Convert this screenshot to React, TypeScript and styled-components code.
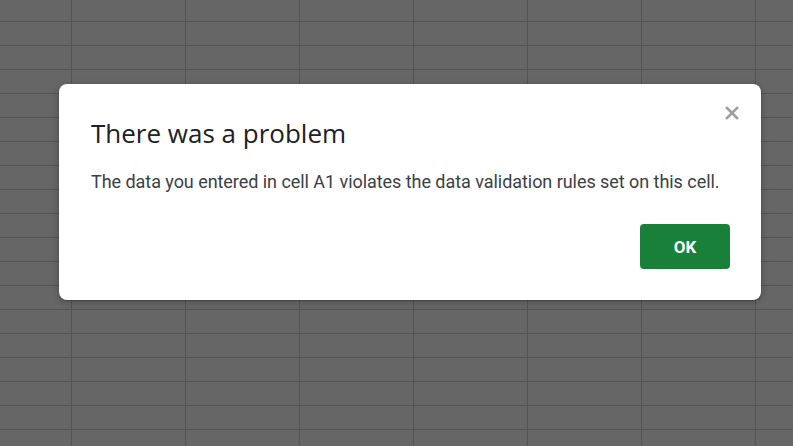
import React from "react";
import styled, { createGlobalStyle } from "styled-components";

const Global = createGlobalStyle`
  html, body { margin: 0; padding: 0; }
  body {
    width: 793px;
    height: 446px;
    overflow: hidden;
    font-family: Roboto, "Liberation Sans", Arial, sans-serif;
  }
`;

const Sheet = styled.div`
  position: relative;
  width: 793px;
  height: 446px;
  background-color: #666666;
  background-image:
    linear-gradient(to bottom, #535353 1px, transparent 1px),
    linear-gradient(to right, #535353 1px, transparent 1px);
  background-size: 114px 24px, 114px 24px;
  background-position: 0 21px, 71px 0;
`;

const Dialog = styled.div`
  position: absolute;
  left: 59px;
  top: 84px;
  width: 702px;
  height: 216px;
  box-sizing: border-box;
  background: #ffffff;
  border-radius: 8px;
  box-shadow: 0 2px 6px 2px rgba(0, 0, 0, 0.12), 0 1px 2px rgba(0, 0, 0, 0.25);
  padding: 32px 31px 31px 32px;
  display: flex;
  flex-direction: column;
`;

const Title = styled.h2`
  margin: 0;
  font-family: "Open Sans", Roboto, sans-serif;
  font-weight: 400;
  font-size: 26px;
  line-height: 34px;
  color: #202124;
`;

const Message = styled.p`
  margin: 19px 0 0;
  font-family: Roboto, "Liberation Sans", sans-serif;
  font-size: 18px;
  line-height: 26px;
  letter-spacing: -0.05px;
  color: #3c4043;
`;

const Actions = styled.div`
  margin-top: auto;
  display: flex;
  justify-content: flex-end;
`;

const OkButton = styled.button`
  width: 90px;
  height: 45px;
  border: none;
  border-radius: 4px;
  background: #188038;
  color: #ffffff;
  font-family: Roboto, "Liberation Sans", sans-serif;
  font-weight: 700;
  font-size: 17px;
  cursor: pointer;
`;

const CloseButton = styled.button`
  position: absolute;
  top: 15px;
  right: 15px;
  width: 28px;
  height: 28px;
  padding: 0;
  border: none;
  background: transparent;
  display: flex;
  align-items: center;
  justify-content: center;
  cursor: pointer;
`;

export default function App() {
  return (
    <>
      <Global />
      <Sheet>
        <Dialog role="dialog">
          <CloseButton aria-label="Close">
            <svg width="14" height="14" viewBox="0 0 14 14">
              <path d="M2 2 L12 12 M12 2 L2 12" stroke="#9e9e9e" strokeWidth="2.6" strokeLinecap="square" />
            </svg>
          </CloseButton>
          <Title>There was a problem</Title>
          <Message>
            The data you entered in cell A1 violates the data validation rules set on this cell.
          </Message>
          <Actions>
            <OkButton>OK</OkButton>
          </Actions>
        </Dialog>
      </Sheet>
    </>
  );
}
